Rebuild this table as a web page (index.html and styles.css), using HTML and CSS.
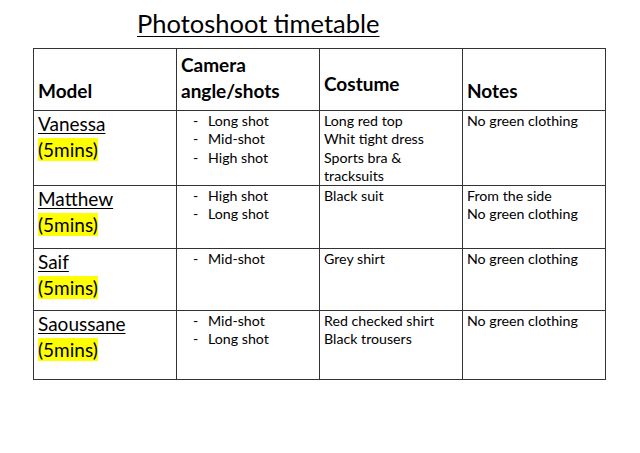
FILE: index.html
```html
<!DOCTYPE html>
<html>
<head>
<meta charset="utf-8">
<link rel="stylesheet" href="styles.css">
</head>
<body>
<h1 class="title">Photoshoot timetable</h1>
<table class="tt">
  <colgroup><col class="c"><col class="c"><col class="c"><col class="c"></colgroup>
  <tr class="head">
    <th class="h-bottom">Model</th>
    <th class="h-bottom">Camera<br>angle/shots</th>
    <th class="h-cost">Costume</th>
    <th class="h-bottom">Notes</th>
  </tr>
  <tr class="r1">
    <td class="name"><span class="u">Vanessa</span><br><span class="hl">(5mins)</span></td>
    <td><ul class="shots"><li>Long shot</li><li>Mid-shot</li><li>High shot</li></ul></td>
    <td>Long red top<br>Whit tight dress<br>Sports bra &amp;<br>tracksuits</td>
    <td>No green clothing</td>
  </tr>
  <tr class="r2">
    <td class="name"><span class="u">Matthew</span><br><span class="hl">(5mins)</span></td>
    <td><ul class="shots"><li>High shot</li><li>Long shot</li></ul></td>
    <td>Black suit</td>
    <td>From the side<br>No green clothing</td>
  </tr>
  <tr class="r3">
    <td class="name"><span class="u">Saif</span><br><span class="hl">(5mins)</span></td>
    <td><ul class="shots"><li>Mid-shot</li></ul></td>
    <td>Grey shirt</td>
    <td>No green clothing</td>
  </tr>
  <tr class="r4">
    <td class="name"><span class="u">Saoussane</span><br><span class="hl">(5mins)</span></td>
    <td><ul class="shots"><li>Mid-shot</li><li>Long shot</li></ul></td>
    <td>Red checked shirt<br>Black trousers</td>
    <td>No green clothing</td>
  </tr>
</table>
</body>
</html>
```
FILE: styles.css
```css
html, body {
  margin: 0;
  padding: 0;
  background: #fff;
}
body {
  font-family: Lato, "Open Sans", "Liberation Sans", sans-serif;
  color: #000;
  width: 640px;
  height: 453px;
  overflow: hidden;
}
.title {
  margin: 0;
  padding: 7px 0 0 137px;
  height: 41px;
  box-sizing: border-box;
  font-weight: 400;
  font-size: 25.5px;
  line-height: 32px;
  text-decoration: underline;
  text-decoration-thickness: 1px;
  text-underline-offset: 3px;
}
.tt {
  margin-left: 33px;
  margin-top: 7px;
  border-collapse: collapse;
  table-layout: fixed;
  width: 573px;
}
.c { width: 143px; }
.tt th, .tt td {
  border: 1px solid #333;
  padding: 1px 4px 0 4px;
  text-align: left;
  vertical-align: top;
  font-size: 14.2px;
  line-height: 18.3px;
  font-weight: 400;
}
.tt th {
  font-weight: 700;
  font-size: 19px;
  line-height: 26px;
  vertical-align: bottom;
  padding-bottom: 6px;
}
.tt th.h-cost { padding-bottom: 13px; }
.head { height: 62px; }
.r1 { height: 75px; }
.r2 { height: 63px; }
.r3 { height: 62px; }
.r4 { height: 69px; }
.tt td.name {
  font-size: 19px;
  line-height: 26px;
  padding-top: 0;
}
.u {
  text-decoration: underline;
  text-decoration-thickness: 1px;
  text-underline-offset: 2px;
}
.hl { background: #ffff00; }
.shots {
  list-style: none;
  margin: 0;
  padding: 0 0 0 9px;
}
.shots li {
  position: relative;
  padding-left: 18px;
}
.shots li::before {
  content: "-";
  position: absolute;
  left: 3px;
  top: 0;
}
```
